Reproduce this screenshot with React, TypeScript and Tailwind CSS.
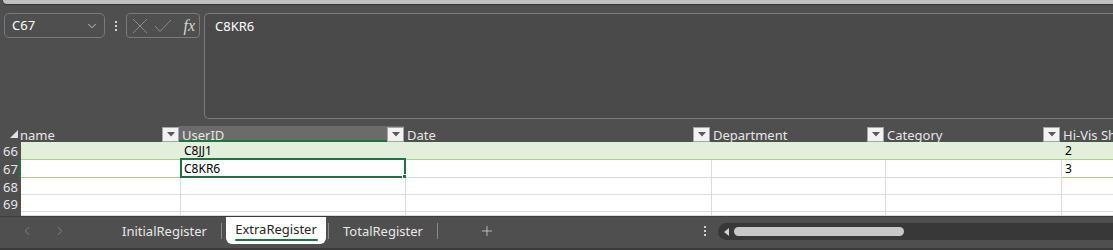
import React from 'react';
import { ChevronDown, ChevronLeft, ChevronRight, Plus } from 'lucide-react';

const cols = [
  { key: 'name', label: 'name', w: 'w-[160px]' },
  { key: 'user', label: 'UserID', w: 'w-[225px]' },
  { key: 'date', label: 'Date', w: 'w-[306px]' },
  { key: 'dept', label: 'Department', w: 'w-[174px]' },
  { key: 'cat', label: 'Category', w: 'w-[176px]' },
  { key: 'hivis', label: 'Hi-Vis Shirt', w: 'w-[80px]' },
];

const rows = [
  { n: '66', h: 'h-[18px]', band: true, last: false, vals: ['', 'C8JJ1', '', '', '', '2'] },
  { n: '67', h: 'h-[18px]', band: false, last: true, vals: ['', 'C8KR6', '', '', '', '3'] },
  { n: '68', h: 'h-[17px]', band: false, last: false, vals: ['', '', '', '', '', ''] },
  { n: '69', h: 'h-[17px]', band: false, last: false, vals: ['', '', '', '', '', ''] },
  { n: '', h: 'h-[4px]', band: false, last: false, vals: ['', '', '', '', '', ''] },
];

const FilterButton = () => (
  <div className="absolute right-0 top-[1px] w-[17px] h-[15px] bg-[#f2f2f2] border border-[#a6a6a6] flex items-center justify-center">
    <svg width="8" height="5" viewBox="0 0 8 5">
      <path d="M0 0 L8 0 L4 4.5 Z" fill="#595959" />
    </svg>
  </div>
);

const Sep = () => (
  <div className="h-[28px] flex items-center">
    <span className="w-[1px] h-[16px] bg-[#8a8a8a]" />
  </div>
);

export default function App() {
  return (
    <div className="w-[1113px] h-[250px] overflow-hidden bg-[#4f4f4f] flex flex-col font-['Noto_Sans',sans-serif] select-none">
      {/* window strip */}
      <div className="h-[4px] shrink-0 ml-[3px] bg-[#c0c0c0] rounded-bl-[6px] shadow-[0_1px_1px_#333]" />

      {/* formula bar */}
      <div className="h-[122px] shrink-0 flex items-start pt-[9px] pl-[4px]">
        <div className="w-[101px] h-[25px] rounded-[5px] border border-[#7a7a7a] flex items-center justify-between pl-[7px] pr-[5px] text-[13px] text-white">
          <span>C67</span>
          <ChevronDown size={14} strokeWidth={1.5} className="text-[#cfcfcf]" />
        </div>
        <div className="w-[21px] h-[25px] flex flex-col items-center justify-center gap-[2px]">
          <span className="w-[2px] h-[2px] bg-[#d0d0d0]" />
          <span className="w-[2px] h-[2px] bg-[#d0d0d0]" />
          <span className="w-[2px] h-[2px] bg-[#d0d0d0]" />
        </div>
        <div className="w-[74px] h-[25px] rounded-[4px] border border-[#7a7a7a] flex items-center pl-[5px] pr-[4px]">
          <svg width="16" height="16" viewBox="0 0 16 16" fill="none" stroke="#8a8a8a" strokeWidth="1">
            <path d="M1 1 L15 15 M15 1 L1 15" />
          </svg>
          <svg className="ml-[6px]" width="18" height="14" viewBox="0 0 18 14" fill="none" stroke="#8a8a8a" strokeWidth="1">
            <path d="M1 7 L6 12.5 L17 1" />
          </svg>
          <span className="ml-auto font-['Liberation_Serif',serif] italic text-[16px] text-[#d8d8d8] leading-none">fx</span>
        </div>
        <div className="ml-[4px] flex-1 h-[106px] rounded-l-[5px] border border-r-0 border-[#7a7a7a] bg-[#4a4a4a] pl-[10px] pt-[3px] text-[13px] text-white">
          C8KR6
        </div>
      </div>

      {/* grid */}
      <div className="h-[90px] shrink-0 flex flex-col overflow-hidden">
        {/* header */}
        <div className="h-[16px] flex text-[13px] leading-[16px] text-[#e6e6e6]">
          <div className="w-[21px] shrink-0 relative">
            <svg className="absolute left-[10px] top-[4px]" width="8" height="8" viewBox="0 0 8 8">
              <path d="M8 0 L8 8 L0 8 Z" fill="#e0e0e0" />
            </svg>
          </div>
          {cols.map((c, i) => (
            <div
              key={c.key}
              className={`${c.w} shrink-0 relative pt-[1px] whitespace-nowrap ${i === 0 ? '-ml-[2px] pl-[1px]' : 'pl-[3px]'} ${c.key === 'user' ? 'bg-[#6b6b6b] border-b-2 border-[#1f7244]' : ''}`}
            >
              {c.label}
              {c.key !== 'hivis' && <FilterButton />}
            </div>
          ))}
        </div>

        {rows.map((r) => (
          <div key={r.n + r.h} className={`${r.h} flex text-[12px] leading-[18px]`}>
            <div
              className={`w-[21px] shrink-0 bg-[#4f4f4f] text-[13px] text-[#e6e6e6] pl-[3px] ${r.n === '67' ? 'border-r-2 border-[#1f7244]' : ''}`}
            >
              {r.n}
            </div>
            {cols.map((c, i) => (
              <div
                key={c.key}
                className={`${c.w} shrink-0 relative pl-[3px] text-black ${
                  r.band ? 'bg-[#e2efda]' : 'bg-white'
                } ${r.band || r.last ? 'border-b border-[#a9d08e]' : 'border-b border-[#dadada]'} ${
                  !r.band && i < cols.length - 1 && !(r.last && i === 0) ? 'border-r border-[#dadada]' : ''
                }`}
              >
                {r.vals[i]}
                {r.n === '67' && c.key === 'user' && (
                  <div className="absolute -left-[1px] -top-[2px] -right-[1px] -bottom-[1px] border-2 border-[#1f7244] pointer-events-none">
                    <div className="absolute -right-[4px] -bottom-[4px] w-[6px] h-[6px] bg-[#1f7244] border border-white" />
                  </div>
                )}
              </div>
            ))}
          </div>
        ))}
      </div>

      {/* sheet tabs */}
      <div className="flex-1 flex items-start bg-[#4f4f4f] border-t border-[#3c3c3c] border-b-2 border-b-[#3a3a3a] text-[13px]">
        <div className="w-[110px] h-[28px] flex items-center pl-[20px] gap-[19px] text-[#9a9a9a]">
          <ChevronLeft size={14} strokeWidth={1.2} />
          <ChevronRight size={14} strokeWidth={1.2} />
        </div>
        <div className="w-[111px] h-[28px] flex items-center pt-[1px] pl-[12px] text-[#e8e8e8] whitespace-nowrap">InitialRegister</div>
        <Sep />
        <div className="ml-[4px] w-[100px] h-[27px] bg-white rounded-b-[6px] flex flex-col items-center pt-[3px] text-[#262626]">
          <span className="leading-[18px] whitespace-nowrap">ExtraRegister</span>
          <span className="mt-[1px] w-[83px] h-[2px] bg-[#1f7244] rounded-full" />
        </div>
        <div className="ml-[2px]">
          <Sep />
        </div>
        <div className="w-[108px] h-[28px] flex items-center pt-[1px] pl-[14px] text-[#e8e8e8] whitespace-nowrap">TotalRegister</div>
        <Sep />
        <div className="h-[28px] flex items-center ml-[41px] text-[#e8e8e8]">
          <Plus size={16} strokeWidth={1} />
        </div>
        <div className="h-[28px] flex flex-col items-center justify-center gap-[2px] ml-[209px]">
          <span className="w-[2px] h-[2px] bg-[#d0d0d0]" />
          <span className="w-[2px] h-[2px] bg-[#d0d0d0]" />
          <span className="w-[2px] h-[2px] bg-[#d0d0d0]" />
        </div>
        <div className="ml-[12px] mt-[6px] flex-1 h-[17px] rounded-l-full bg-[#383838] flex items-center pl-[6px] gap-[5px]">
          <svg width="5" height="8" viewBox="0 0 5 8">
            <path d="M5 0 L5 8 L0 4 Z" fill="#d0d0d0" />
          </svg>
          <div className="w-[170px] h-[9px] rounded-full bg-[#c8c8c8]" />
        </div>
      </div>
    </div>
  );
}
